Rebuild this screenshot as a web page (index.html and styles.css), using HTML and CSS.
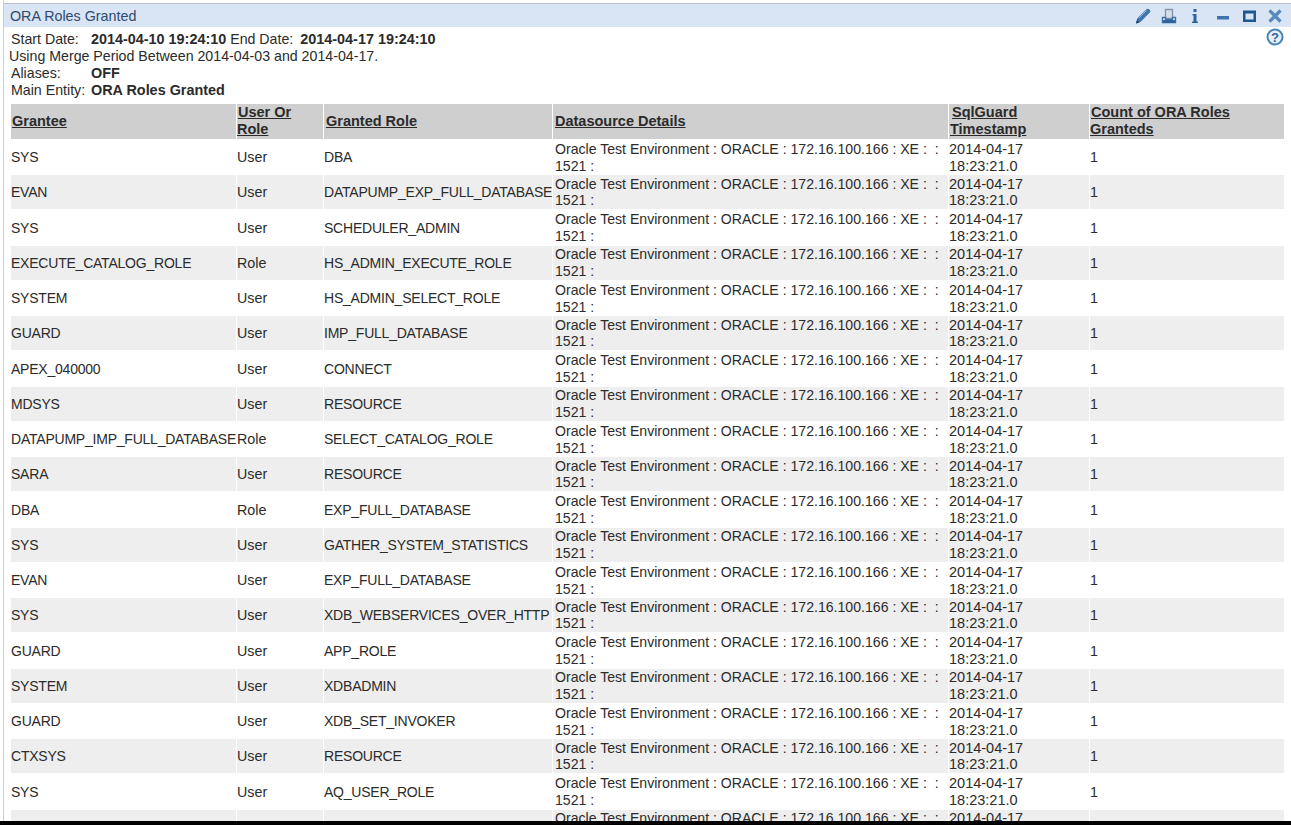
FILE: index.html
```html
<!DOCTYPE html>
<html lang="en">
<head>
<meta charset="utf-8">
<title>ORA Roles Granted</title>
<link rel="stylesheet" href="styles.css">
</head>
<body>
<div class="app">
  <section class="panel">
    <header class="titlebar">
      <h1 class="title">ORA Roles Granted</h1>
      <div class="tools">
        <svg class="tool" viewBox="0 0 16 16"><path d="M1 15.500l1.200-5L11.500 1.200c.8-.7 1.700-.7 2.400 0l.9.9c.7.7.7 1.600 0 2.400L5.500 14z" fill="#3f74ad"/><path d="M1 15.500l1-3.500 2.500 2.500z" fill="#1f3f66"/><path d="M4 10l7.500-7.500" stroke="#8db2d8" stroke-width="1"/></svg>
        <svg class="tool" viewBox="0 0 16 16"><path d="M4.500 1.500h7v9h-7z" fill="#d9dfe8" stroke="#8496ae" stroke-width="1.400"/><path d="M1.500 9.500h3v2h7v-2h3v5h-13z" fill="#f2f6fb" stroke="#3d6fa8" stroke-width="1.400"/><path d="M2 12h12v3H2z" fill="#2f639d"/></svg>
        <svg class="tool tool-info" viewBox="0 0 16 16"><path d="M6.500 1h3v3h-3zM5.500 6h4v7.500h1.500V15H5v-1.500h1.500V7.500h-1z" fill="#2f639d"/></svg>
        <svg class="tool" viewBox="0 0 16 16"><path d="M2 8h12v3.500H2z" fill="#3d74ad"/></svg>
        <svg class="tool" viewBox="0 0 16 16"><path d="M2 2.500h13v11.500H2zM4.500 5.500v6h8v-6z" fill="#1f5795" fill-rule="evenodd"/></svg>
        <svg class="tool" viewBox="0 0 16 16"><path d="M2.500 2.500l11 11M13.500 2.500l-11 11" stroke="#5a88b8" stroke-width="3.200" fill="none"/></svg>
      </div>
    </header>
    <div class="body">
      <svg class="help" viewBox="0 0 18 18"><circle cx="9" cy="9" r="7.500" fill="#e8f0f8" stroke="#4c86b8" stroke-width="2"/><text x="9" y="13.500" class="help-mark">?</text></svg>
      <div class="meta">
        <div class="meta-row"><span class="meta-label">Start Date:</span><b class="meta-value">2014-04-10 19:24:10</b> <span class="meta-end">End Date:</span><b class="meta-value meta-value-end">2014-04-17 19:24:10</b></div>
        <div class="meta-row meta-merge">Using Merge Period Between 2014-04-03 and 2014-04-17.</div>
        <div class="meta-row"><span class="meta-label">Aliases:</span><b class="meta-value">OFF</b></div>
        <div class="meta-row"><span class="meta-label">Main Entity:</span><b class="meta-value">ORA Roles Granted</b></div>
      </div>
      <table class="report">
        <thead>
          <tr>
            <th class="c1"><a class="sort">Grantee</a></th>
            <th class="c2"><a class="sort">User Or Role</a></th>
            <th class="c3"><a class="sort">Granted Role</a></th>
            <th class="c4"><a class="sort">Datasource Details</a></th>
            <th class="c5"><a class="sort sort-wide">SqlGuard Timestamp</a></th>
            <th class="c6"><a class="sort">Count of ORA Roles Granteds</a></th>
          </tr>
        </thead>
        <tbody id="rows"></tbody>
      </table>
    </div>
  </section>
  <div class="bottom-bar"></div>
</div>
<script src="rows.js"></script>
</body>
</html>
```
FILE: rows.js
```js
var data = [
  ["SYS","User","DBA"],["EVAN","User","DATAPUMP_EXP_FULL_DATABASE"],["SYS","User","SCHEDULER_ADMIN"],
  ["EXECUTE_CATALOG_ROLE","Role","HS_ADMIN_EXECUTE_ROLE"],["SYSTEM","User","HS_ADMIN_SELECT_ROLE"],
  ["GUARD","User","IMP_FULL_DATABASE"],["APEX_040000","User","CONNECT"],["MDSYS","User","RESOURCE"],
  ["DATAPUMP_IMP_FULL_DATABASE","Role","SELECT_CATALOG_ROLE"],["SARA","User","RESOURCE"],
  ["DBA","Role","EXP_FULL_DATABASE"],["SYS","User","GATHER_SYSTEM_STATISTICS"],["EVAN","User","EXP_FULL_DATABASE"],
  ["SYS","User","XDB_WEBSERVICES_OVER_HTTP"],["GUARD","User","APP_ROLE"],["SYSTEM","User","XDBADMIN"],
  ["GUARD","User","XDB_SET_INVOKER"],["CTXSYS","User","RESOURCE"],["SYS","User","AQ_USER_ROLE"],["","",""]
];
var body = document.getElementById("rows");
data.forEach(function (r) {
  var tr = document.createElement("tr");
  r.concat(["Oracle Test Environment : ORACLE : 172.16.100.166 : XE :\u00a0 :\u00a0\n1521 :", "2014-04-17 18:23:21.0", "1"]).forEach(function (v) {
    var td = document.createElement("td");
    td.textContent = v;
    tr.appendChild(td);
  });
  body.appendChild(tr);
});
```
FILE: styles.css
```css
* { box-sizing: border-box; }
html, body { margin: 0; height: 100%; overflow: hidden; background: #fff; }
body { font: 14.5px/17px "Liberation Sans", Arial, sans-serif; color: #2b2b2b; }
.app { height: 825px; display: flex; flex-direction: column; }
.panel { flex: 1; min-height: 0; overflow: hidden; margin-left: 3px; padding-top: 3px; border-left: 1px solid #c4cde0; display: flex; flex-direction: column; }
.titlebar { flex: none; height: 24px; display: flex; align-items: center; justify-content: space-between; padding: 0 8px 0 6px; background: #d9e5f5; border-top: 1px solid #b9bfca; }
.title { margin: 1px 0 0; font-size: 14.3px; font-weight: normal; color: #2e4a6e; }
.tools { display: flex; gap: 10px; }
.tool { width: 16px; height: 16px; display: block; }
.tool-info { margin-right: 2px; }
.body { position: relative; flex: 1; min-height: 0; overflow: hidden; padding: 4px 7px 0 7px; }
.help { position: absolute; top: 1px; right: 7px; width: 18px; height: 18px; }
.help-mark { font: bold 13px "Liberation Sans", sans-serif; fill: #2f639d; text-anchor: middle; }
.meta { margin-bottom: 5px; font-size: 14.2px; }
.meta-row { height: 17px; white-space: nowrap; }
.meta-merge { margin-left: -2px; }
.meta-label { display: inline-block; width: 80px; }
.meta-value { font-weight: bold; font-size: 14.4px; }
.meta-value-end { margin-left: 7px; }
.report { table-layout: fixed; width: 1273px; border-collapse: separate; border-spacing: 0; }
.c1 { width: 226px; }
.c2 { width: 87px; }
.c3 { width: 229px; }
.c4 { width: 396px; }
.c5 { width: 141px; }
.c6 { width: 194px; }
th { height: 34.5px; padding: 0; background: #cfcfcf; border-right: 1px solid #fff; text-align: left; font-weight: bold; vertical-align: middle; }
th:last-child, td:last-child { border-right: 0; }
th:nth-child(3), th:nth-child(4), th:nth-child(5) { padding-left: 1px; }
.sort { color: #2b2b2b; text-decoration: underline; padding-left: 1px; }
.sort-wide { padding-left: 2px; }
td { padding: 0; border-right: 1px solid #fff; vertical-align: middle; font-size: 14.3px; white-space: pre-line; }
td:nth-child(1), td:nth-child(3) { font-size: 14px; letter-spacing: -0.22px; }
td:nth-child(4) { font-size: 14.1px; padding-left: 2px; }
td:nth-child(5) { font-size: 14.5px; }
tbody tr:nth-child(odd) { height: 36.5px; }
tbody tr:nth-child(odd) td { padding-top: 2.25px; }
tbody tr:nth-child(even) { height: 34px; }
tbody tr:nth-child(even) td { background: #eee; padding-top: 0.75px; line-height: 16.5px; }
.bottom-bar { flex: none; height: 4px; background: #000; }
```
